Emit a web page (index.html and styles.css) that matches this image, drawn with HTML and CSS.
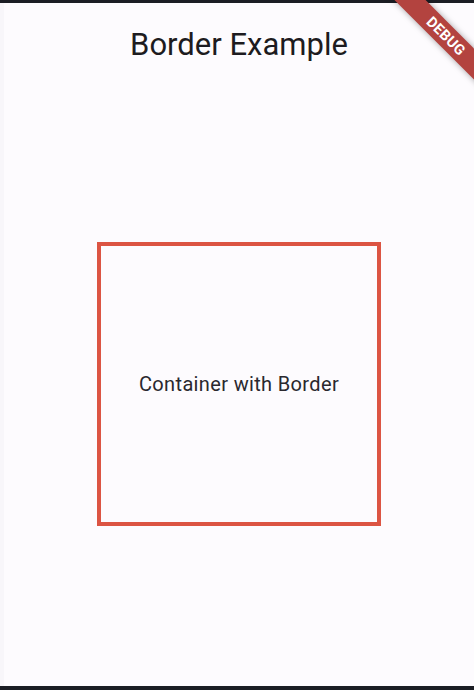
FILE: index.html
```html
<!DOCTYPE html>
<html>
<head>
<meta charset="utf-8">
<link rel="stylesheet" href="styles.css">
</head>
<body>
<div class="screen">
  <div class="topbar"></div>
  <div class="app">
    <div class="edge"></div>
    <div class="content">
      <header class="appbar"><h1 class="title">Border Example</h1></header>
      <main class="body">
        <div class="bordered"><span class="label">Container with Border</span></div>
      </main>
    </div>
  </div>
  <div class="bottombar"></div>
  <div class="banner"><span>DEBUG</span></div>
</div>
</body>
</html>
```
FILE: styles.css
```css
html, body {
  margin: 0;
  padding: 0;
}
body {
  width: 474px;
  height: 690px;
  overflow: hidden;
  background: #fdfbfe;
  font-family: Roboto, "Noto Sans", sans-serif;
}
.screen {
  position: relative;
  width: 474px;
  height: 690px;
  display: flex;
  flex-direction: column;
  overflow: hidden;
}
.topbar {
  height: 3px;
  background: #1b1d24;
}
.bottombar {
  height: 4px;
  background: #1b1d24;
}
.app {
  flex: 1;
  display: flex;
}
.edge {
  width: 4px;
  background: #f8f6fa;
}
.content {
  flex: 1;
  display: flex;
  flex-direction: column;
  background: #fdfbfe;
}
.appbar {
  height: 79px;
  display: flex;
  justify-content: center;
  align-items: flex-start;
}
.title {
  margin: 22px 0 0;
  font-weight: 400;
  font-size: 31px;
  line-height: 40px;
  color: #1d1b20;
}
.body {
  flex: 1;
  display: flex;
  align-items: center;
  justify-content: center;
}
.bordered {
  box-sizing: border-box;
  width: 284px;
  height: 284px;
  border: 4px solid #dc5443;
  display: flex;
  align-items: center;
  justify-content: center;
}
.label {
  font-size: 20px;
  letter-spacing: 0.35px;
  color: #2a282e;
}
.banner {
  position: absolute;
  left: 346px;
  top: 25px;
  width: 200px;
  height: 22px;
  background: #b3433f;
  transform: rotate(45deg);
  box-shadow: 0 0 6px rgba(0,0,0,0.35);
  display: flex;
  align-items: center;
  justify-content: center;
}
.banner span {
  color: #ffffff;
  font-weight: 700;
  font-size: 14.5px;
  letter-spacing: 0.3px;
}
```
